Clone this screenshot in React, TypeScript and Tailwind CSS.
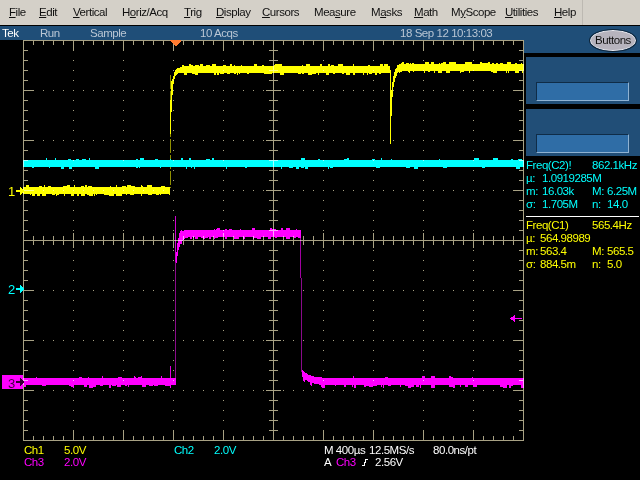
import React from "react";

const FONT = "font-['Liberation_Sans',Arial,sans-serif]";

// seeded so the noise on the traces is the same every run
function makeRng(seed: number) {
  let s = seed;
  return () => {
    s = (s + 0x6d2b79f5) | 0;
    let t = Math.imul(s ^ (s >>> 15), 1 | s);
    t = (t + Math.imul(t ^ (t >>> 7), 61 | t)) ^ t;
    return ((t ^ (t >>> 14)) >>> 0) / 4294967296;
  };
}

type Env = (x: number) => [number, number];

// bumps last a few columns, that gives the blocky look of the scope's display
function trace(seed: number, x0: number, x1: number, env: Env, up: number, upMax: number, dn: number, dnMax: number) {
  const rng = makeRng(seed);
  let d = "";
  let upLeft = 0;
  let upH = 0;
  let dnLeft = 0;
  let dnH = 0;
  for (let x = x0; x <= x1; x++) {
    const [t, b] = env(x);
    if (upLeft <= 0 && rng() < up) {
      upLeft = 1 + Math.floor(rng() * 4);
      upH = 1 + Math.floor(rng() * upMax);
    }
    if (dnLeft <= 0 && rng() < dn) {
      dnLeft = 1 + Math.floor(rng() * 4);
      dnH = 1 + Math.floor(rng() * dnMax);
    }
    const top = Math.round(t) - (upLeft > 0 ? upH : 0);
    const bot = Math.round(b) + 1 + (dnLeft > 0 ? dnH : 0);
    upLeft--;
    dnLeft--;
    d += `M${x}.5 ${top}V${bot}`;
  }
  return d;
}

function yellowEnv(x: number): [number, number] {
  if (x <= 169) return [187, 193];
  if (x === 170) return [100, 131];
  if (x < 182) {
    const dx = x - 171;
    return [66 + 17 * Math.exp(-dx / 3.5), 72 + 37 * Math.exp(-dx / 1.6)];
  }
  if (x < 390) return [66, 72];
  if (x === 390) return [70, 143];
  const dx = x - 390;
  return [64 + 40 * Math.exp(-dx / 2.5), 70 + 72 * Math.exp(-dx / 2)];
}

function magentaEnv(x: number): [number, number] {
  if (x <= 175) return [378, 384];
  if (x <= 300) {
    const dx = x - 176;
    return [230 + 22 * Math.exp(-dx / 2), 236 + 26 * Math.exp(-dx / 3)];
  }
  const dx = x - 302;
  const off = 8 * Math.exp(-dx / 7);
  return [378 - off, 384 - off];
}

const yellow1 = trace(11, 23, 169, yellowEnv, 0.22, 2, 0.22, 2);
const yellow2 = trace(12, 170, 389, yellowEnv, 0.2, 2, 0.18, 2);
const yellow3 = trace(13, 390, 523, yellowEnv, 0.18, 2, 0.18, 2);
const cyan = trace(21, 23, 523, () => [160, 166], 0.08, 2, 0.08, 2);
const mag1 = trace(31, 23, 175, magentaEnv, 0.04, 2, 0.2, 3);
const mag2 = trace(32, 176, 300, magentaEnv, 0.18, 2, 0.2, 2);
const mag3 = trace(33, 302, 523, magentaEnv, 0.04, 2, 0.2, 3);

function graticule() {
  let lines = "";
  let dots = "";
  // frame ticks
  for (let x = 33; x < 523; x += 10) {
    const len = (x - 23) % 50 === 0 ? 10 : 4;
    lines += `M${x}.5 41v${len}M${x}.5 440v${-len}`;
  }
  for (let y = 50; y < 440; y += 10) {
    const len = (y - 40) % 50 === 0 ? 10 : 4;
    lines += `M24 ${y}.5h${len}M523 ${y}.5h${-len}`;
  }
  // centre cross
  for (let x = 33; x < 523; x += 10) {
    const h = (x - 23) % 50 === 0 ? 7 : 4;
    lines += `M${x}.5 ${240 - h}V${241 + h}`;
  }
  for (let y = 50; y < 440; y += 10) {
    const h = (y - 40) % 50 === 0 ? 7 : 4;
    lines += `M${273 - h} ${y}.5H${274 + h}`;
  }
  // dots on the division lines
  for (let x = 73; x < 523; x += 50) {
    if (x === 273) continue;
    for (let y = 50; y < 440; y += 10) dots += `M${x} ${y}h1v1h-1z`;
  }
  for (let y = 90; y < 440; y += 50) {
    if (y === 240) continue;
    for (let x = 33; x < 523; x += 10) dots += `M${x} ${y}h1v1h-1z`;
  }
  return { lines, dots };
}

const grid = graticule();

function Plot() {
  return (
    <svg width="524" height="401" viewBox="0 40 524 401" shapeRendering="crispEdges" className="block">
      <g fill="none" strokeWidth="1">
        <path d="M170.5 75V188" stroke="#8f8f00" strokeDasharray="14 2" />
        <path d={cyan} stroke="#00ffff" />
        <path d={yellow1} stroke="#ffff00" />
        <path d={yellow2} stroke="#ffff00" />
        <path d={yellow3} stroke="#ffff00" />
        <path d="M175.5 229V380" stroke="#8a0a8a" />
        <path d="M175.5 216V262" stroke="#d000d0" />
        <path d="M170.5 366V380" stroke="#e000e0" />
        <path d="M300.5 238V278" stroke="#a000a0" />
        <path d="M301.5 278V372" stroke="#8a0a8a" />
        <path d={mag1} stroke="#ff00ff" />
        <path d={mag2} stroke="#ff00ff" />
        <path d={mag3} stroke="#ff00ff" />
      </g>
      <g className="mix-blend-screen">
        <path d="M23.5 40.5H523.5V440.5H23.5Z M23 240.5H523 M273.5 40V440" fill="none" stroke="#a8a284" />
        <path d={grid.lines} fill="none" stroke="#a8a284" />
        <path d={grid.dots} fill="#a8a284" />
      </g>
      <path d="M170 40H181V41L176 46H175L170 41Z" fill="#ff7a30" />

      <rect x="2" y="375" width="21" height="14" fill="#ff00ff" />
      <text x="8" y="196" className="fill-[#ffff00] text-[13px]">1</text>
      <text x="8" y="294" className="fill-[#00ffff] text-[13px]">2</text>
      <text x="8" y="388" className="fill-[#400040] text-[13px]">3</text>
      <path d="M16 190h4v-3l4 4-4 4v-3h-4z" fill="#ffff00" />
      <path d="M16 288h4v-3l4 4-4 4v-3h-4z" fill="#00ffff" />
      <path d="M16 381h4v-3l4 4-4 4v-3h-4z" fill="#300030" />
      <path d="M522 318h-7v-3l-5 3.500 5 3.500v-3h7z" fill="#ff00ff" />
    </svg>
  );
}

const menu = [
  { pre: "", u: "F", post: "ile", cls: "w-[39px] pl-[9px]" },
  { pre: "", u: "E", post: "dit", cls: "w-[34px]" },
  { pre: "", u: "V", post: "ertical", cls: "w-[49px]" },
  { pre: "H", u: "o", post: "riz/Acq", cls: "w-[62px]" },
  { pre: "", u: "T", post: "rig", cls: "w-[32px]" },
  { pre: "", u: "D", post: "isplay", cls: "w-[46px]" },
  { pre: "", u: "C", post: "ursors", cls: "w-[52px]" },
  { pre: "Mea", u: "s", post: "ure", cls: "w-[57px]" },
  { pre: "M", u: "a", post: "sks", cls: "w-[43px]" },
  { pre: "", u: "M", post: "ath", cls: "w-[37px]" },
  { pre: "M", u: "y", post: "Scope", cls: "w-[54px]" },
  { pre: "", u: "U", post: "tilities", cls: "w-[49px]" },
  { pre: "", u: "H", post: "elp", cls: "w-[28px]" },
];

function MeasureRow({ a, av, b, bv, aw = "w-[16px]", avw = "w-[50px]" }: { a: string; av: string; b?: string; bv?: string; aw?: string; avw?: string }) {
  return (
    <div className="flex h-[13px] leading-[13px] whitespace-nowrap">
      <span className={aw}>{a}</span>
      <span className={avw}>{av}</span>
      {b && <span className="w-[15px]">{b}</span>}
      {bv && <span>{bv}</span>}
    </div>
  );
}

function EmptyPanel() {
  return (
    <div className="h-[47px] ml-[2px] bg-[#214e77] pl-[10px] pr-[11px] pt-[25px]">
      <div className="h-[19px] bg-[#2f6da6] border border-t-[#0f2c47] border-l-[#0f2c47] border-r-[#8fb2d2] border-b-[#8fb2d2]" />
    </div>
  );
}

export default function App() {
  return (
    <div className={`${FONT} w-[640px] h-[480px] bg-black overflow-hidden text-[11.5px] tracking-[-0.45px] flex flex-col`}>
      <div className="h-[25px] bg-[#d4d0c8] flex items-center text-[#111]">
        {menu.map((m) => (
          <span key={m.post} className={`${m.cls} shrink-0 whitespace-nowrap`}>
            {m.pre}
            <span className="underline">{m.u}</span>
            {m.post}
          </span>
        ))}
        <div className="h-[25px] border-l border-[#bdb9b2]" />
      </div>
      <div className="h-px bg-black" />
      <div className="flex">
        <div className="w-[524px] shrink-0">
          <div className="h-[14px] bg-[#1f4e78] flex leading-[14px] text-[#b9c6d4] whitespace-nowrap">
            <span className="w-[40px] pl-[2px] text-white">Tek</span>
            <span className="w-[50px]">Run</span>
            <span className="w-[110px]">Sample</span>
            <span className="w-[200px]">10 Acqs</span>
            <span>18 Sep 12 10:13:03</span>
          </div>
          <Plot />
          <div className="pt-[3px] leading-[12px] whitespace-nowrap text-white">
            <div className="flex h-[12px]">
              <span className="w-[64px] pl-[24px] text-[#ffff00]">Ch1</span>
              <span className="w-[110px] text-[#ffff00]">5.0V</span>
              <span className="w-[40px] text-[#00ffff]">Ch2</span>
              <span className="w-[110px] text-[#00ffff]">2.0V</span>
              <span className="w-[45px]">M 400µs</span>
              <span className="w-[64px]">12.5MS/s</span>
              <span>80.0ns/pt</span>
            </div>
            <div className="flex h-[12px]">
              <span className="w-[64px] pl-[24px] text-[#ff00ff]">Ch3</span>
              <span className="w-[260px] text-[#ff00ff]">2.0V</span>
              <span className="w-[12px]">A</span>
              <span className="w-[26px] text-[#ff00ff]">Ch3</span>
              <span className="w-[13px] flex items-center">
                <svg width="6" height="8" viewBox="0 0 6 8" shapeRendering="crispEdges">
                  <path d="M0 7.500H2L4 1.500H6" fill="none" stroke="#fff" />
                </svg>
              </span>
              <span>2.56V</span>
            </div>
          </div>
        </div>
        <div className="w-[116px] shrink-0">
          <div className="h-[27px] bg-[#1f4e78] flex justify-end items-start pr-[4px] pt-[4px]">
            <div className="w-[46px] h-[21px] rounded-[50%] bg-[#b6b3bd] border border-[#e8e8ee] outline outline-1 outline-[#0c2338] text-[#111] flex items-center justify-center">
              Buttons
            </div>
          </div>
          <div className="h-[4px]" />
          <EmptyPanel />
          <div className="h-[5px]" />
          <EmptyPanel />
          <div className="pl-[2px] pt-[3px] text-[#00ffff]">
            <div className="flex h-[13px] leading-[13px] whitespace-nowrap">
              <span className="w-[66px]">Freq(C2)!</span>
              <span>862.1kHz</span>
            </div>
            <MeasureRow a="µ:" av="1.0919285M" />
            <MeasureRow a="m:" av="16.03k" b="M:" bv="6.25M" />
            <MeasureRow a="σ:" av="1.705M" b="n:" bv="14.0" />
          </div>
          <div className="h-px bg-white ml-[2px] mt-[5px] mr-px" />
          <div className="pl-[2px] pt-[2px] text-[#ffff00]">
            <div className="flex h-[13px] leading-[13px] whitespace-nowrap">
              <span className="w-[66px]">Freq(C1)</span>
              <span>565.4Hz</span>
            </div>
            <MeasureRow a="µ:" av="564.98989" aw="w-[14px]" />
            <MeasureRow a="m:" av="563.4" b="M:" bv="565.5" aw="w-[14px]" avw="w-[52px]" />
            <MeasureRow a="σ:" av="884.5m" b="n:" bv="5.0" aw="w-[14px]" avw="w-[52px]" />
          </div>
        </div>
      </div>
    </div>
  );
}
